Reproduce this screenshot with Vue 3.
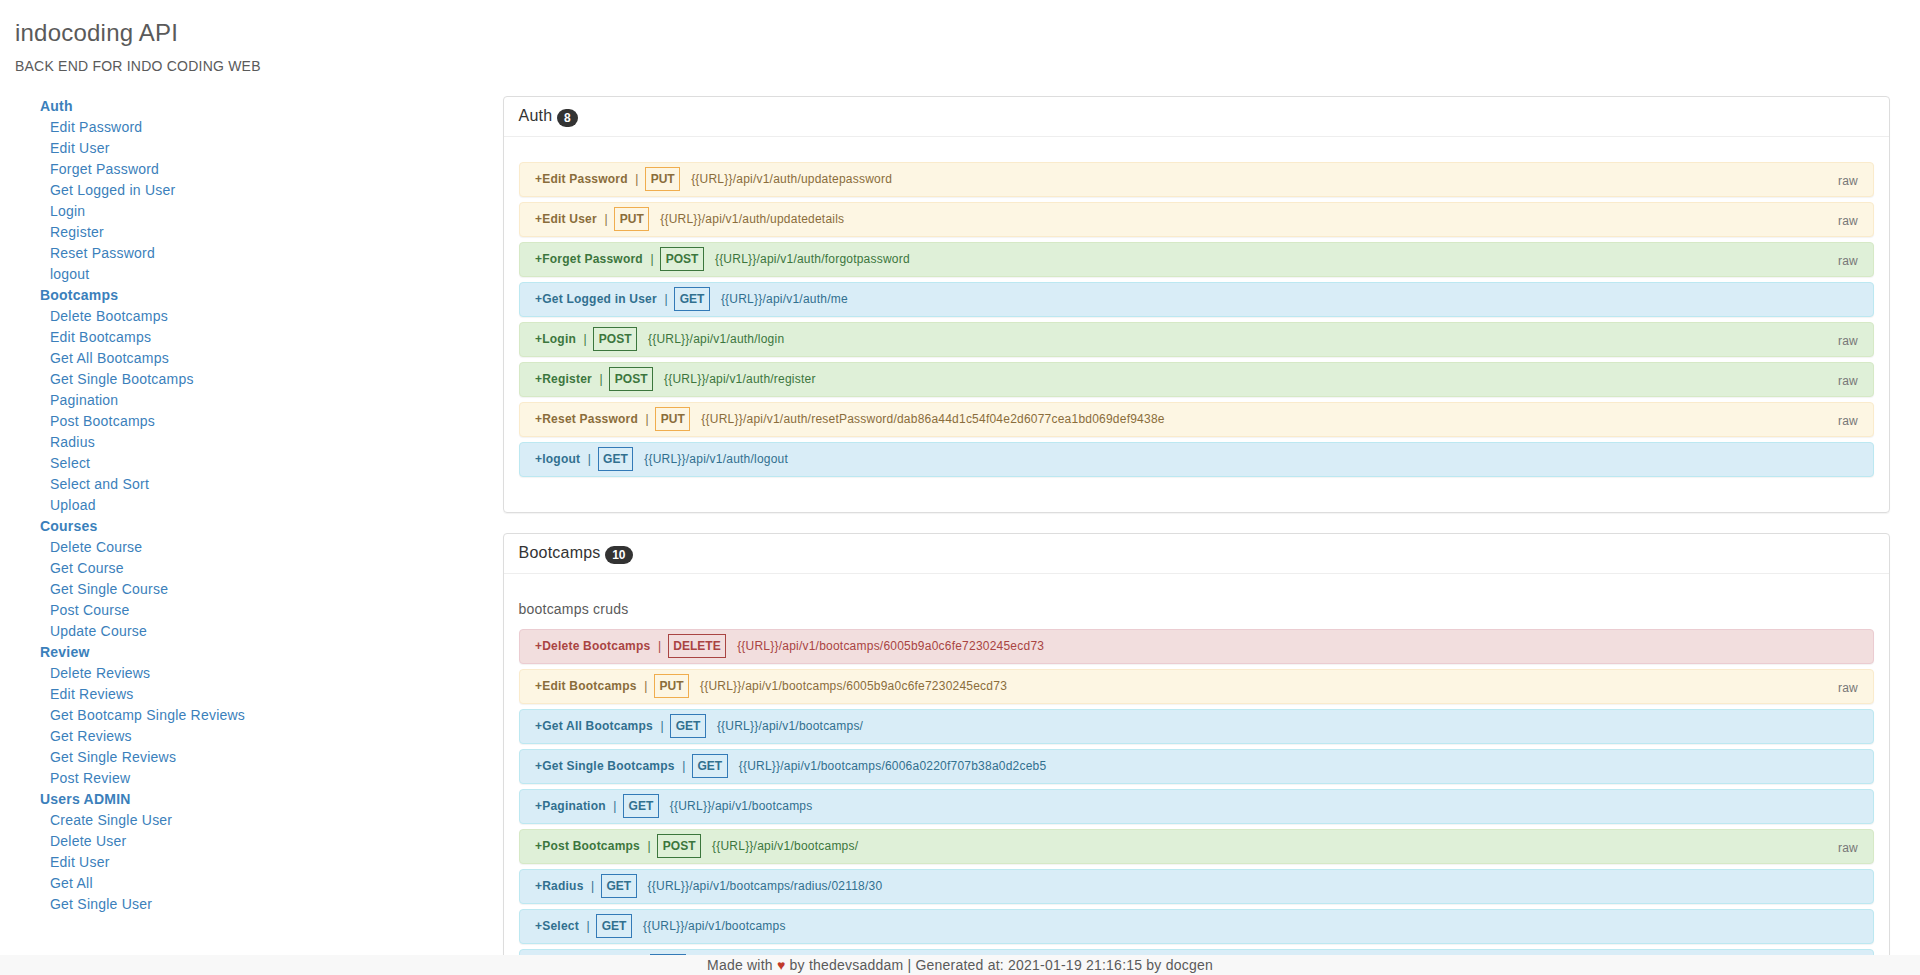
<template>
  <div class="page">
    <header class="top">
      <h3 class="title">indocoding API</h3>
      <p class="subtitle">BACK END FOR INDO CODING WEB</p>
    </header>

    <div class="content">
      <nav class="sidebar">
        <ul class="groups">
          <li v-for="group in menu" :key="group.name">
            <a class="group-link" href="#">{{ group.name }}</a>
            <ul class="items">
              <li v-for="item in group.items" :key="item">
                <a class="item-link" href="#">{{ item }}</a>
              </li>
            </ul>
          </li>
        </ul>
      </nav>

      <main class="main">
        <section v-for="panel in panels" :key="panel.name" class="panel">
          <div class="panel-heading">
            <h3 class="panel-title">
              {{ panel.name }} <span class="badge">{{ panel.count }}</span>
            </h3>
          </div>
          <div class="panel-body">
            <p class="description">{{ panel.description }}</p>
            <div
              v-for="row in panel.rows"
              :key="row.title"
              class="request"
              :class="methodClass[row.method]"
            >
              <b class="request-title">+{{ row.title }}</b>
              <span class="sep">|</span>
              <b class="method">{{ row.method }}</b>
              <span class="url">{{ row.url }}</span>
              <span v-if="hasRaw(row)" class="raw">raw</span>
            </div>
          </div>
        </section>
      </main>
    </div>

    <footer class="footer">
      Made with <span class="heart">♥</span> by thedevsaddam | Generated at: 2021-01-19 21:16:15 by docgen
    </footer>
  </div>
</template>

<script setup>
const menu = [
  {
    name: "Auth",
    items: [
      "Edit Password",
      "Edit User",
      "Forget Password",
      "Get Logged in User",
      "Login",
      "Register",
      "Reset Password",
      "logout",
    ],
  },
  {
    name: "Bootcamps",
    items: [
      "Delete Bootcamps",
      "Edit Bootcamps",
      "Get All Bootcamps",
      "Get Single Bootcamps",
      "Pagination",
      "Post Bootcamps",
      "Radius",
      "Select",
      "Select and Sort",
      "Upload",
    ],
  },
  {
    name: "Courses",
    items: [
      "Delete Course",
      "Get Course",
      "Get Single Course",
      "Post Course",
      "Update Course",
    ],
  },
  {
    name: "Review",
    items: [
      "Delete Reviews",
      "Edit Reviews",
      "Get Bootcamp Single Reviews",
      "Get Reviews",
      "Get Single Reviews",
      "Post Review",
    ],
  },
  {
    name: "Users ADMIN",
    items: [
      "Create Single User",
      "Delete User",
      "Edit User",
      "Get All",
      "Get Single User",
    ],
  },
];

const panels = [
  {
    name: "Auth",
    count: 8,
    description: "",
    rows: [
      { title: "Edit Password", method: "PUT", url: "{{URL}}/api/v1/auth/updatepassword" },
      { title: "Edit User", method: "PUT", url: "{{URL}}/api/v1/auth/updatedetails" },
      { title: "Forget Password", method: "POST", url: "{{URL}}/api/v1/auth/forgotpassword" },
      { title: "Get Logged in User", method: "GET", url: "{{URL}}/api/v1/auth/me" },
      { title: "Login", method: "POST", url: "{{URL}}/api/v1/auth/login" },
      { title: "Register", method: "POST", url: "{{URL}}/api/v1/auth/register" },
      {
        title: "Reset Password",
        method: "PUT",
        url: "{{URL}}/api/v1/auth/resetPassword/dab86a44d1c54f04e2d6077cea1bd069def9438e",
      },
      { title: "logout", method: "GET", url: "{{URL}}/api/v1/auth/logout" },
    ],
  },
  {
    name: "Bootcamps",
    count: 10,
    description: "bootcamps cruds",
    rows: [
      { title: "Delete Bootcamps", method: "DELETE", url: "{{URL}}/api/v1/bootcamps/6005b9a0c6fe7230245ecd73" },
      { title: "Edit Bootcamps", method: "PUT", url: "{{URL}}/api/v1/bootcamps/6005b9a0c6fe7230245ecd73" },
      { title: "Get All Bootcamps", method: "GET", url: "{{URL}}/api/v1/bootcamps/" },
      { title: "Get Single Bootcamps", method: "GET", url: "{{URL}}/api/v1/bootcamps/6006a0220f707b38a0d2ceb5" },
      { title: "Pagination", method: "GET", url: "{{URL}}/api/v1/bootcamps" },
      { title: "Post Bootcamps", method: "POST", url: "{{URL}}/api/v1/bootcamps/" },
      { title: "Radius", method: "GET", url: "{{URL}}/api/v1/bootcamps/radius/02118/30" },
      { title: "Select", method: "GET", url: "{{URL}}/api/v1/bootcamps" },
      { title: "Select and Sort", method: "GET", url: "{{URL}}/api/v1/bootcamps" },
    ],
  },
];

const methodClass = {
  GET: "is-get",
  POST: "is-post",
  PUT: "is-put",
  DELETE: "is-delete",
};

const hasRaw = (row) => row.method === "PUT" || row.method === "POST";
</script>

<style>
html,
body {
  margin: 0;
  background: #fff;
}
</style>

<style scoped>
.page {
  font-family: "Liberation Sans", Arial, sans-serif;
  font-size: 14px;
  letter-spacing: 0.22px;
  color: #5a5a5a;
  height: 975px;
  overflow: hidden;
  position: relative;
}
.top {
  padding-left: 15px;
}
.title {
  margin: 20px 0 10px;
  font-size: 24px;
  font-weight: 400;
  line-height: 26.4px;
}
.subtitle {
  margin: 0 0 20px;
  line-height: 20px;
}
.content {
  display: flex;
  align-items: flex-start;
}
.sidebar {
  width: 503px;
  flex: none;
  box-sizing: border-box;
  padding-left: 40px;
}
.groups,
.items {
  list-style: none;
  margin: 0;
  padding: 0;
}
.items {
  padding-left: 10px;
}
.groups a {
  display: block;
  height: 21px;
  line-height: 21px;
  color: #3b7fbb;
  text-decoration: none;
}
.group-link {
  font-weight: 700;
}
.main {
  width: 1387px;
  flex: none;
}
.panel {
  border: 1px solid #ddd;
  border-radius: 4px;
  box-shadow: 0 1px 1px rgba(0, 0, 0, 0.05);
  margin-bottom: 20px;
}
.panel-heading {
  padding: 9px 15px 11px 14.5px;
  border-bottom: 1px solid #eee;
  height: 40px;
  box-sizing: border-box;
}
.panel-title {
  margin: 0;
  font-size: 16px;
  font-weight: 400;
  line-height: 19px;
  color: #333;
}
.badge {
  display: inline-block;
  padding: 3px 7px;
  font-size: 12px;
  font-weight: 700;
  letter-spacing: 0;
  line-height: 1;
  color: #fff;
  background: #333;
  border-radius: 10px;
  vertical-align: middle;
  position: relative;
  top: 1px;
}
.panel-body {
  padding: 15px 15px 30px;
}
.description {
  margin: 10px 0 10px -0.5px;
  line-height: 20px;
}
.description:empty {
  margin: 0 0 10px;
}
.request {
  display: flex;
  align-items: center;
  box-sizing: border-box;
  height: 35px;
  margin-bottom: 5px;
  padding: 0 15px 2px 15px;
  border: 1px solid;
  border-radius: 4px;
  font-size: 12px;
  box-shadow: 0 1px 1px rgba(0, 0, 0, 0.05);
}
.sep {
  margin: 0 6.5px 0 7.5px;
}
.method {
  box-sizing: border-box;
  height: 24px;
  line-height: 22px;
  padding: 0 4.5px;
  border: 1px solid;
  letter-spacing: 0;
}
.url {
  margin-left: 11px;
}
.raw {
  margin-left: auto;
  margin-top: 4px;
  font-size: 12px;
  color: #777;
}
.is-put {
  background: #fdf6e3;
  border-color: #faebcc;
  color: #8a6d3b;
}
.is-put .method {
  border-color: #f0ad4e;
}
.is-post {
  background: #dff0d8;
  border-color: #d6e9c6;
  color: #3c763d;
}
.is-post .method {
  border-color: #3c763d;
}
.is-get {
  background: #d9edf7;
  border-color: #bce8f1;
  color: #31708f;
}
.is-get .method {
  border-color: #337ab7;
}
.is-delete {
  background: #f2dede;
  border-color: #ebccd1;
  color: #a94442;
}
.is-delete .method {
  border-color: #a94442;
}
.footer {
  position: absolute;
  left: 0;
  right: 0;
  bottom: 0;
  height: 20px;
  line-height: 20px;
  text-align: center;
  background: #f8f8f8;
  color: #5a5a5a;
}
.heart {
  color: #c0392b;
}
</style>
